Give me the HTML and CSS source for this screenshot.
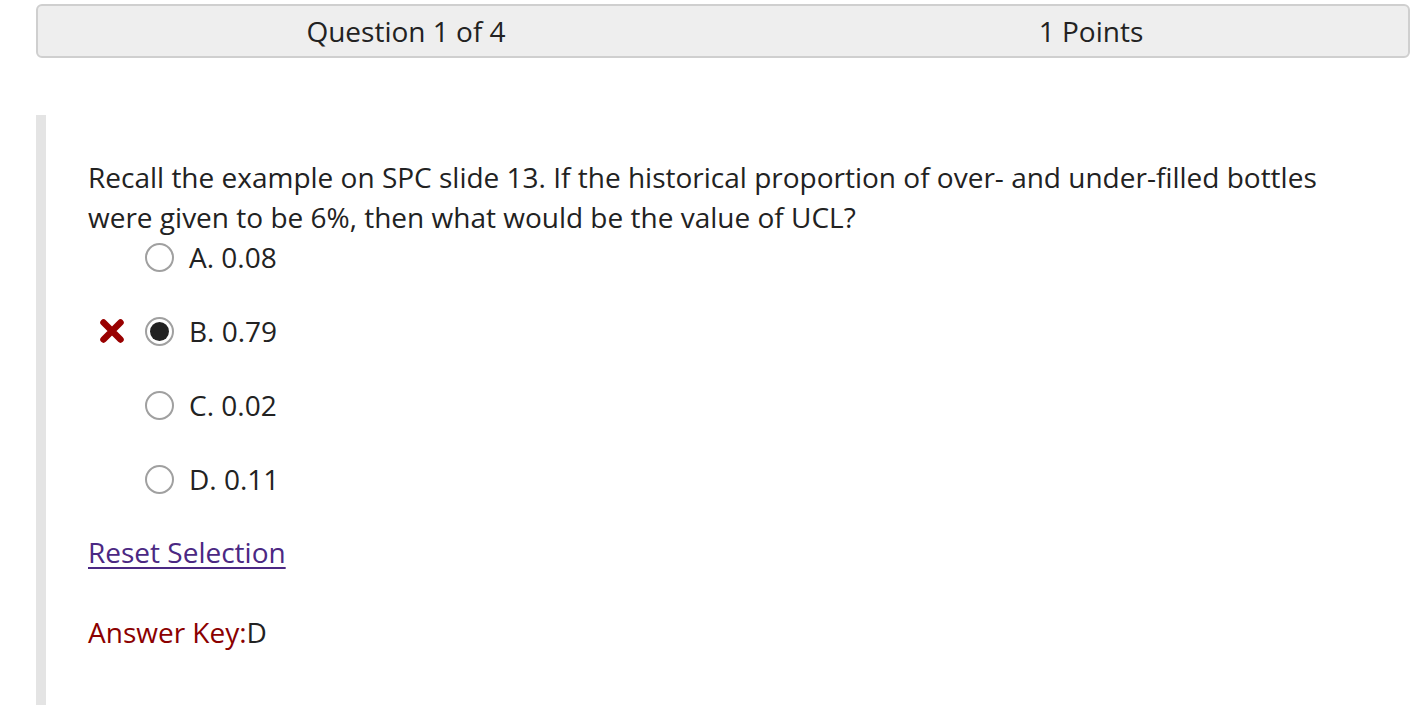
FILE: index.html
```html
<!DOCTYPE html>
<html>
<head>
<meta charset="utf-8">
<link rel="stylesheet" href="styles.css">
</head>
<body>
<div class="header">
  <div class="cell cell-left">Question 1 of 4</div>
  <div class="cell cell-right">1 Points</div>
</div>
<div class="question">
  <p class="prompt">Recall the example on SPC slide 13. If the historical proportion of over- and under-filled bottles were given to be 6%, then what would be the value of UCL?</p>
  <div class="option">
    <span class="mark"></span>
    <span class="radio"></span>
    <span class="label">A. 0.08</span>
  </div>
  <div class="option">
    <span class="mark">
      <svg width="26" height="26" viewBox="0 0 26 26"><path d="M4.5 4.5 L21.5 21.5 M21.5 4.5 L4.5 21.5" stroke="#990000" stroke-width="6.5" stroke-linecap="round" fill="none"/></svg>
    </span>
    <span class="radio checked"></span>
    <span class="label">B. 0.79</span>
  </div>
  <div class="option">
    <span class="mark"></span>
    <span class="radio"></span>
    <span class="label">C. 0.02</span>
  </div>
  <div class="option">
    <span class="mark"></span>
    <span class="radio"></span>
    <span class="label">D. 0.11</span>
  </div>
  <div class="reset"><a href="#">Reset Selection</a></div>
  <div class="answer"><span class="key">Answer Key:</span>D</div>
</div>
</body>
</html>
```
FILE: styles.css
```css
html, body {
  margin: 0;
  padding: 0;
  background: #fff;
}
body {
  font-family: "Open Sans", "Noto Sans", sans-serif;
  color: #222;
  font-size: 28px;
}
.header {
  margin: 4px 16px 0 36px;
  height: 54px;
  box-sizing: border-box;
  border: 2px solid #cfcfcf;
  border-radius: 6px;
  background: #eeeeee;
  display: flex;
  align-items: center;
}
.cell {
  text-align: center;
  line-height: 30px;
}
.cell-left {
  width: 736px;
  flex: none;
}
.cell-right {
  flex: 1;
}
.question {
  margin: 57px 0 0 36px;
  border-left: 10px solid #e4e4e4;
  height: 590px;
  padding: 42px 0 0 42px;
  box-sizing: border-box;
}
.prompt {
  margin: 0;
  line-height: 40px;
  max-width: 1250px;
}
.option {
  display: flex;
  align-items: center;
  height: 40px;
  margin-bottom: 34px;
  padding-left: 11px;
}
.mark {
  width: 46px;
  flex: none;
  display: flex;
  align-items: center;
}
.radio {
  width: 29px;
  height: 29px;
  box-sizing: border-box;
  border: 2px solid #a0a0a0;
  border-radius: 50%;
  flex: none;
  display: flex;
  align-items: center;
  justify-content: center;
  margin-right: 15px;
}
.radio.checked::after {
  content: "";
  width: 19px;
  height: 19px;
  border-radius: 50%;
  background: #222;
}
.label {
  line-height: 40px;
}
.reset {
  margin-top: -1px;
  line-height: 40px;
}
.reset a {
  color: #4b2883;
  text-decoration: underline;
  text-underline-offset: 4px;
  text-decoration-thickness: 2px;
}
.answer {
  margin-top: 40px;
  line-height: 40px;
}
.key {
  color: #8b0000;
}
```
